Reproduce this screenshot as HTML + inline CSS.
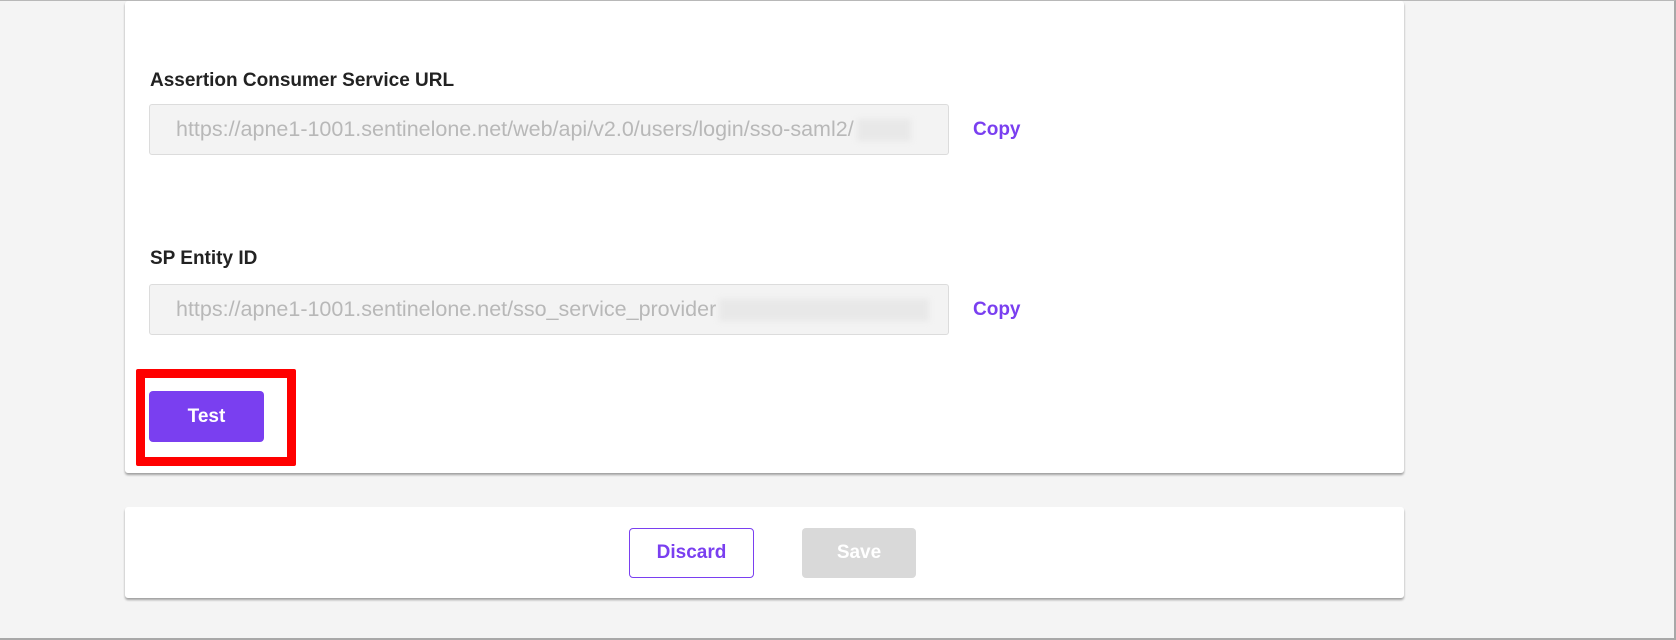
<!DOCTYPE html>
<html><head><meta charset="utf-8"><style>
*{margin:0;padding:0;box-sizing:border-box}
html,body{width:1676px;height:640px;overflow:hidden}
body{background:#f4f4f4;font-family:"Liberation Sans",sans-serif;position:relative;border-right:2px solid #a8a8a8;border-bottom:2px solid #a8a8a8;border-top:1px solid #b8b8b8}
.card{position:absolute;left:125px;width:1279px;background:#fff;border-radius:3px;box-shadow:0 2px 2px rgba(0,0,0,.35)}
.lbl{position:absolute;left:150px;font-size:19px;font-weight:bold;color:#222}
.inp{position:absolute;left:149px;width:800px;height:51px;background:#f3f3f3;border:1px solid #dcdcdc;border-radius:3px;color:#b8b8b8;font-size:21.5px;line-height:49px;padding-left:26px;white-space:nowrap;overflow:hidden}
.blur{display:inline-block;vertical-align:middle;height:22px;background:#e8e8e8;filter:blur(3px);margin-left:3px}
.copy{position:absolute;left:973px;font-size:19px;font-weight:bold;color:#7a3ff0}
.btn{position:absolute;border-radius:4px;font-size:19px;font-weight:bold;text-align:center}
</style></head><body>
<div class="card" style="top:0;height:472px"></div>
<div class="card" style="top:506px;height:91px"></div>
<div class="lbl" style="top:69px">Assertion Consumer Service URL</div>
<div class="inp" style="top:103px">https://apne1-1001.sentinelone.net/web/api/v2.0/users/login/sso-saml2/<span class="blur" style="width:54px"></span></div>
<div class="copy" style="top:118px">Copy</div>
<div class="lbl" style="top:247px">SP Entity ID</div>
<div class="inp" style="top:283px">https://apne1-1001.sentinelone.net/sso_service_provider<span class="blur" style="width:210px"></span></div>
<div class="copy" style="top:298px">Copy</div>
<div style="position:absolute;left:136px;top:368px;width:160px;height:97px;border:9px solid #ff0000;border-radius:2px"></div>
<div class="btn" style="left:149px;top:390px;width:115px;height:51px;background:#7a3ff0;color:#fff;line-height:51px">Test</div>
<div class="btn" style="left:629px;top:527px;width:125px;height:50px;border:1px solid #7a3ff0;color:#7a3ff0;line-height:48px">Discard</div>
<div class="btn" style="left:802px;top:527px;width:114px;height:50px;background:#d9d9d9;color:#fff;line-height:50px">Save</div>
</body></html>
